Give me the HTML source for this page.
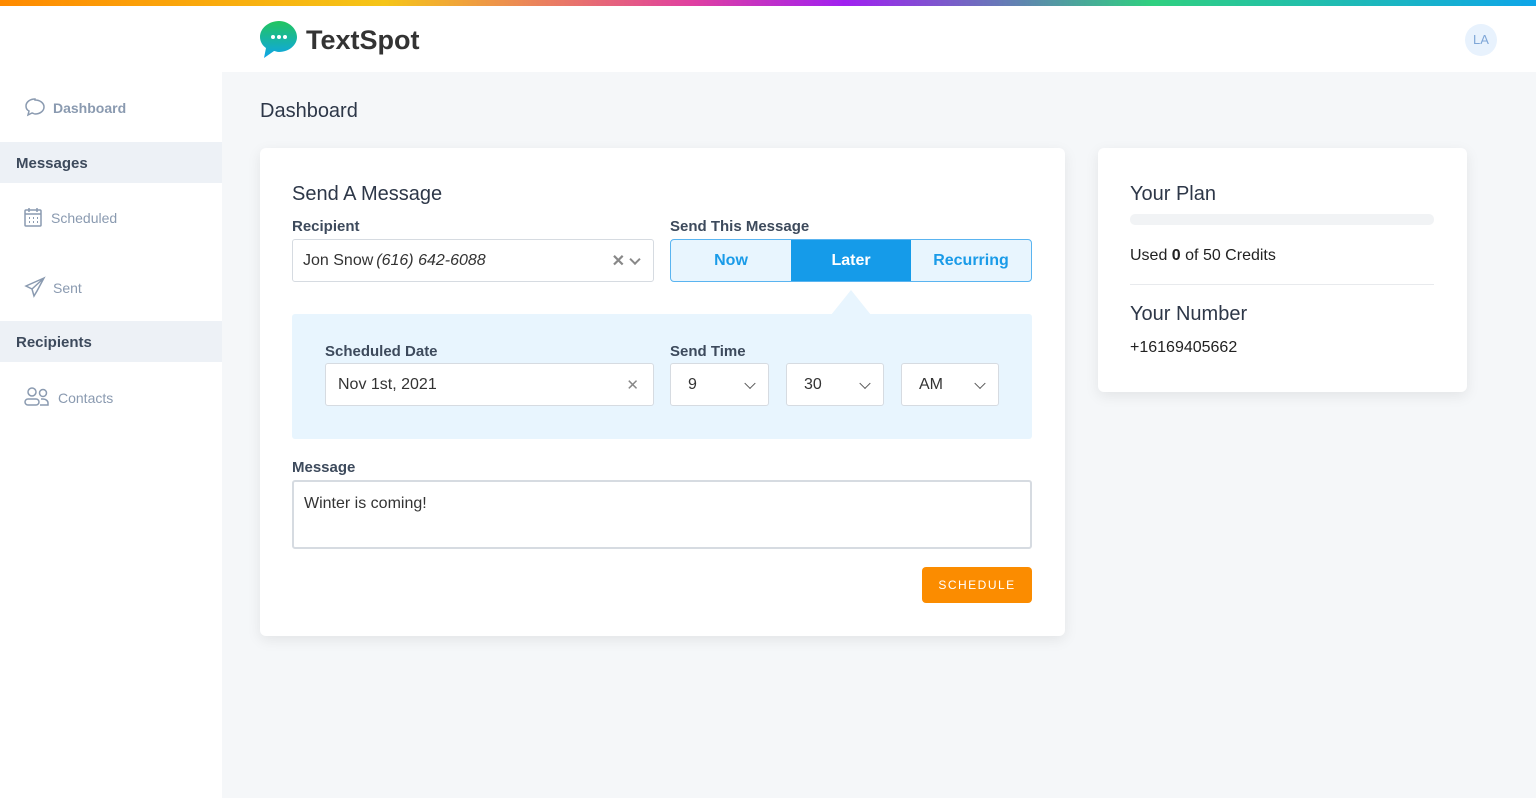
<!DOCTYPE html>
<html><head><style>
*{box-sizing:border-box;margin:0;padding:0}
body{width:1536px;height:798px;overflow:hidden;font-family:"Liberation Sans",sans-serif;background:#f5f7f9;position:relative;color:#2d3748}
.bar{position:absolute;top:0;left:0;width:1536px;height:6px;background:linear-gradient(90deg,#ff8a00,#f5c518 25%,#e040a0 45%,#a020f0 55%,#30d080 75%,#0ea5e9)}
.side{position:absolute;top:6px;left:0;width:222px;height:792px;background:#fff}
.head{position:absolute;top:6px;left:222px;width:1314px;height:66px;background:#fff}
.ab{position:absolute;font-size:14px;color:#8a9ab0}
.sec{position:absolute;left:0;width:222px;height:41px;background:#edf1f6;font-weight:bold;font-size:15px;color:#3d4a5c;padding:13px 16px}
.card{position:absolute;background:#fff;border-radius:6px;box-shadow:0 4px 14px rgba(0,0,0,.08)}
.lbl{position:absolute;font-size:15px;font-weight:bold;color:#3d4a5c}
.inp{position:absolute;background:#fff;border:1px solid #d6dbe1;border-radius:3px;font-size:16px;color:#333;padding:0 12px;display:flex;align-items:center}
.chev{position:absolute;right:14px;top:50%;width:8px;height:8px;border-right:1.5px solid #555;border-bottom:1.5px solid #555;transform:translateY(-70%) rotate(45deg)}
</style></head><body>
<div class="bar"></div>
<div class="side"></div>
<div class="head"></div>
<svg style="position:absolute;left:259px;top:20px" width="38" height="40" viewBox="0 0 38 40"><defs><linearGradient id="g" x1="0" y1="0" x2="0" y2="1"><stop offset="0" stop-color="#22c55e"/><stop offset="1" stop-color="#0ea5e9"/></linearGradient></defs><path d="M20 1C10 1 1 8 1 17c0 5 3 9 6 11l-2 10 10-7c1 0 3 1 5 1 10 0 18-7 18-15S30 1 20 1z" fill="url(#g)"/><circle cx="14" cy="17" r="2" fill="#fff"/><circle cx="20" cy="17" r="2" fill="#fff"/><circle cx="26" cy="17" r="2" fill="#fff"/></svg>
<div style="position:absolute;left:306px;top:25px;font-size:27px;font-weight:bold;color:#333">TextSpot</div>
<div style="position:absolute;left:1465px;top:24px;width:32px;height:32px;border-radius:50%;background:#e8f2fd;color:#7fa7d8;font-size:13px;text-align:center;line-height:32px">LA</div>

<svg style="position:absolute;left:24px;top:97px" width="22" height="20" viewBox="0 0 22 20" fill="none" stroke="#8a9ab0" stroke-width="1.5"><path d="M11 2C6 2 2 5 2 9c0 2 1 4 3 5l-1 4 4-2c1 0 2 1 3 1 5 0 9-3 9-7s-4-7-9-7z"/></svg>
<div class="ab" style="left:53px;top:100px;font-weight:bold">Dashboard</div>
<div class="sec" style="top:142px">Messages</div>
<svg style="position:absolute;left:24px;top:207px" width="18" height="20" viewBox="0 0 18 20" fill="none" stroke="#8a9ab0" stroke-width="1.5"><rect x="1" y="3" width="16" height="16" rx="1"/><path d="M1 7h16M5 1v4M13 1v4"/><path d="M5 11h1M9 11h1M13 11h1M5 15h1M9 15h1M13 15h1" stroke-width="2"/></svg>
<div class="ab" style="left:51px;top:210px">Scheduled</div>
<svg style="position:absolute;left:24px;top:276px" width="22" height="22" viewBox="0 0 22 22" fill="none" stroke="#8a9ab0" stroke-width="1.5"><path d="M20 2L2 10l6 3 2 7 3-5 7-13zM8 13l12-11"/></svg>
<div class="ab" style="left:53px;top:280px">Sent</div>
<div class="sec" style="top:321px">Recipients</div>
<svg style="position:absolute;left:24px;top:387px" width="26" height="20" viewBox="0 0 26 20" fill="none" stroke="#8a9ab0" stroke-width="1.5"><circle cx="8" cy="5" r="4"/><circle cx="19" cy="6" r="3.5"/><rect x="1" y="12" width="14" height="6" rx="3"/><path d="M16 18h8v-2c0-2-2-4-5-4h-2"/></svg>
<div class="ab" style="left:58px;top:390px">Contacts</div>

<div style="position:absolute;left:260px;top:100px;font-size:20px;color:#2d3748">Dashboard</div>

<div class="card" style="left:260px;top:148px;width:805px;height:488px"></div>
<div style="position:absolute;left:292px;top:183px;font-size:20px;color:#2d3748">Send A Message</div>
<div class="lbl" style="left:292px;top:218px">Recipient</div>
<div class="inp" style="left:292px;top:239px;width:362px;height:43px;padding-left:10px">Jon Snow<i style="margin-left:3px">(616) 642-6088</i><span style="position:absolute;right:28px;color:#888;font-weight:bold">✕</span><span class="chev" style="border-color:#888;border-width:2.5px"></span></div>
<div class="lbl" style="left:670px;top:218px">Send This Message</div>
<div style="position:absolute;left:670px;top:239px;width:362px;height:43px;border:1px solid #5ab4f0;border-radius:4px;display:flex;overflow:hidden;background:#e8f5fe;font-size:16px;font-weight:bold;color:#1a9be8">
<div style="flex:1;text-align:center;line-height:41px">Now</div><div style="flex:1;text-align:center;line-height:41px;background:#159be9;color:#fff">Later</div><div style="flex:1;text-align:center;line-height:41px">Recurring</div></div>
<div style="position:absolute;left:831px;top:290px;width:0;height:0;border-left:20px solid transparent;border-right:20px solid transparent;border-bottom:25px solid #e8f5fe"></div>
<div style="position:absolute;left:292px;top:314px;width:740px;height:125px;background:#e8f5fe;border-radius:3px"></div>
<div class="lbl" style="left:325px;top:343px">Scheduled Date</div>
<div class="inp" style="left:325px;top:363px;width:329px;height:43px">Nov 1st, 2021<span style="position:absolute;right:14px;color:#888;font-size:15px">✕</span></div>
<div class="lbl" style="left:670px;top:343px">Send Time</div>
<div class="inp" style="left:670px;top:363px;width:99px;height:43px;padding-left:17px">9<span class="chev"></span></div>
<div class="inp" style="left:786px;top:363px;width:98px;height:43px;padding-left:17px">30<span class="chev"></span></div>
<div class="inp" style="left:901px;top:363px;width:98px;height:43px;padding-left:17px">AM<span class="chev"></span></div>
<div class="lbl" style="left:292px;top:459px">Message</div>
<div class="inp" style="left:292px;top:480px;width:740px;height:69px;align-items:flex-start;padding:13px 10px;border-width:2px">Winter is coming!</div>
<div style="position:absolute;left:922px;top:567px;width:110px;height:36px;background:#fb8c00;border-radius:4px;color:#fff;font-size:12px;letter-spacing:1.5px;text-align:center;line-height:36px">SCHEDULE</div>

<div class="card" style="left:1098px;top:148px;width:369px;height:244px"></div>
<div style="position:absolute;left:1130px;top:183px;font-size:20px;color:#2d3748">Your Plan</div>
<div style="position:absolute;left:1130px;top:214px;width:304px;height:11px;background:#f1f3f5;border-radius:5px"></div>
<div style="position:absolute;left:1130px;top:247px;font-size:16px;color:#222">Used <b>0</b> of 50 Credits</div>
<div style="position:absolute;left:1130px;top:284px;width:304px;height:1px;background:#e8eaed"></div>
<div style="position:absolute;left:1130px;top:303px;font-size:20px;color:#2d3748">Your Number</div>
<div style="position:absolute;left:1130px;top:339px;font-size:16px;color:#222">+16169405662</div>
</body></html>
